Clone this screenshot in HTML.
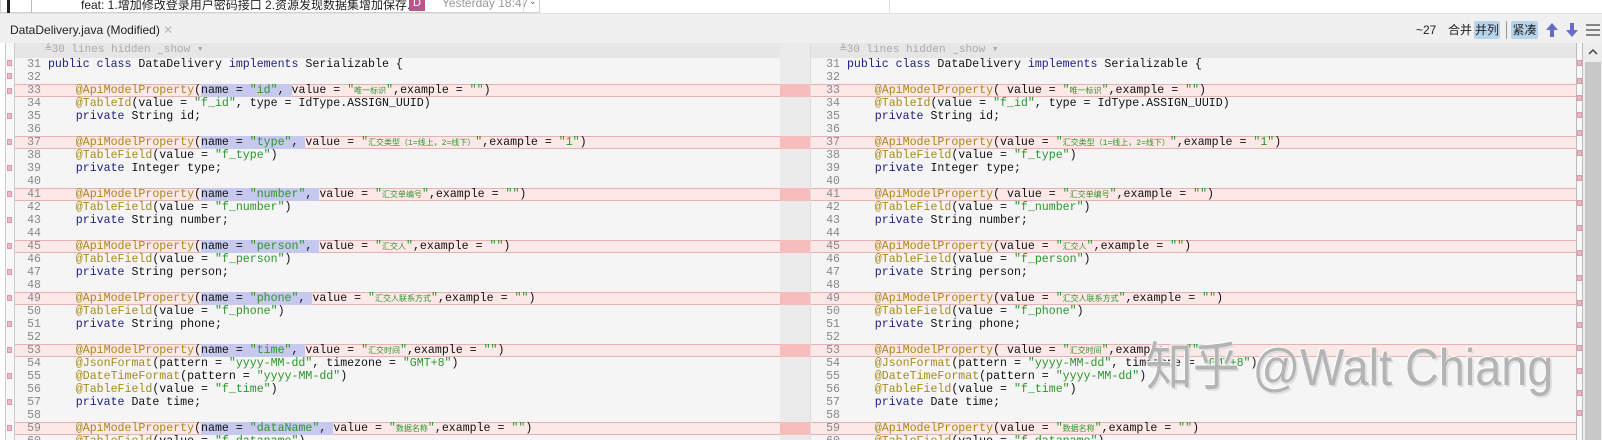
<!DOCTYPE html>
<html><head><meta charset="utf-8"><style>
*{margin:0;padding:0;box-sizing:border-box}
body{width:1602px;height:440px;overflow:hidden;background:#f0f0f0;position:relative;font-family:"Liberation Sans","Noto Sans CJK SC",sans-serif}
.top{position:absolute;left:0;top:0;width:1602px;height:14px;background:#fff;border-bottom:1px solid #e2e2e2}
.commit{position:absolute;left:0;top:-6px;width:540px;height:19px;border:1px solid #d0d0d0;background:#fff;font-size:12px;color:#222}
.tab{position:absolute;left:10px;top:23px;font-size:12px;color:#222}
.tb{position:absolute;top:21px;height:18px;line-height:18px;font-size:12px;color:#222;font-family:"Liberation Sans","Noto Sans CJK SC",sans-serif}
.pane{position:absolute;top:43px;height:397px;background:#f5f5f5;overflow:hidden;font-family:"Liberation Mono","Noto Sans CJK SC",monospace;font-size:11.6px}
.hdr{height:15px;background:#e6e6e6;color:#aaa;font-size:11px;line-height:14px}
.l{height:13px;line-height:13px;white-space:pre;position:relative;color:#111}
.l.d{background:#fde8e8;box-shadow:inset 0 1px 0 #e3b3b3,inset 0 -1px 0 #e3b3b3}
.n{display:inline-block;color:#888;text-align:right}
.a{color:#a68a1a}.k{color:#1e1e80}.s{color:#2c952c}.c{font-size:8px;color:#2c952c}.h{background:#c6c8ee}
.mid{position:absolute;left:780px;top:43px;width:30px;height:397px;background:#ebebeb}
.mb{position:absolute;left:0;width:30px;height:13px;background:#f7bcbc}
.mk{position:absolute;width:5px;height:6px;background:#f2b6c4;border:1px solid #d89aa8}
</style></head><body>
<div class="top"><div class="commit"><span style="position:absolute;left:6px;top:0;width:3px;height:18px;background:#222"></span><span style="position:absolute;left:30px;top:0;width:1px;height:18px;background:#bbb"></span><span style="position:absolute;left:80px;top:1px">feat: 1.增加修改登录用户密码接口 2.资源发现数据集增加保存...</span><span style="position:absolute;left:408px;top:0;width:16px;height:16px;background:#b8578a;color:#fff;font-size:11px;text-align:center;line-height:16px">D</span><span style="position:absolute;left:441px;top:1px;color:#999">Yesterday 18:47</span><span style="position:absolute;left:522px;top:0;width:1px;height:18px;background:#ddd"></span><span style="position:absolute;left:528px;top:1px;font-size:9px;color:#555">&#8964;</span></div>
<div style="position:absolute;left:560px;top:0;width:330px;height:14px;border-right:1px solid #ddd"></div></div>
<div class="tab">DataDelivery.java (Modified) <span style="color:#bbb">✕</span></div>
<div class="tb" style="left:1416px">~27</div>
<div class="tb" style="left:1448px">合并</div>
<div class="tb" style="left:1474px;width:26px;text-align:center;background:#b8d4ec;border-radius:2px">并列</div>
<div style="position:absolute;left:1506px;top:21px;width:1px;height:18px;background:#999"></div>
<div class="tb" style="left:1511px;width:27px;text-align:center;background:#b8d4ec;border-radius:2px">紧凑</div>
<svg style="position:absolute;left:1545px;top:22px" width="14" height="16" viewBox="0 0 14 16"><path d="M7 1 L13 8 L9 8 L9 15 L5 15 L5 8 L1 8 Z" fill="#6a6ac8"/></svg>
<svg style="position:absolute;left:1565px;top:22px" width="14" height="16" viewBox="0 0 14 16"><path d="M7 15 L13 8 L9 8 L9 1 L5 1 L5 8 L1 8 Z" fill="#6a6ac8"/></svg>
<svg style="position:absolute;left:1586px;top:23px" width="14" height="14" viewBox="0 0 14 14"><path d="M0 2H14M0 7H14M0 12H14" stroke="#444" stroke-width="1.3"/></svg>

<div style="position:absolute;left:0;top:43px;width:15px;height:397px;background:#f8f8f8;border-left:5px solid #fff;border-right:1px solid #ccc;box-shadow:inset 1px 0 0 #ccc"></div>

<div class="pane" style="left:15px;width:765px">
<div class="hdr"><span style="margin-left:30px">≜30 lines hidden  ˽show ▾</span></div>
<div class="l"><span class="n" style="width:26px">31</span> <span class="k">public class</span> DataDelivery <span class="k">implements</span> Serializable {</div>
<div class="l"><span class="n" style="width:26px">32</span></div>
<div class="l d"><span class="n" style="width:26px">33</span>     <span class="a">@ApiModelProperty</span>(<span class="h">name = <span class="s">"id"</span>, </span>value = <span class="s">"<span class="c">唯一标识</span>"</span>,example = <span class="s">""</span>)</div>
<div class="l"><span class="n" style="width:26px">34</span>     <span class="a">@TableId</span>(value = <span class="s">"f_id"</span>, type = IdType.ASSIGN_UUID)</div>
<div class="l"><span class="n" style="width:26px">35</span>     <span class="k">private</span> String id;</div>
<div class="l"><span class="n" style="width:26px">36</span></div>
<div class="l d"><span class="n" style="width:26px">37</span>     <span class="a">@ApiModelProperty</span>(<span class="h">name = <span class="s">"type"</span>, </span>value = <span class="s">"<span class="c">汇交类型（1=线上，2=线下）</span>"</span>,example = <span class="s">"1"</span>)</div>
<div class="l"><span class="n" style="width:26px">38</span>     <span class="a">@TableField</span>(value = <span class="s">"f_type"</span>)</div>
<div class="l"><span class="n" style="width:26px">39</span>     <span class="k">private</span> Integer type;</div>
<div class="l"><span class="n" style="width:26px">40</span></div>
<div class="l d"><span class="n" style="width:26px">41</span>     <span class="a">@ApiModelProperty</span>(<span class="h">name = <span class="s">"number"</span>, </span>value = <span class="s">"<span class="c">汇交单编号</span>"</span>,example = <span class="s">""</span>)</div>
<div class="l"><span class="n" style="width:26px">42</span>     <span class="a">@TableField</span>(value = <span class="s">"f_number"</span>)</div>
<div class="l"><span class="n" style="width:26px">43</span>     <span class="k">private</span> String number;</div>
<div class="l"><span class="n" style="width:26px">44</span></div>
<div class="l d"><span class="n" style="width:26px">45</span>     <span class="a">@ApiModelProperty</span>(<span class="h">name = <span class="s">"person"</span>, </span>value = <span class="s">"<span class="c">汇交人</span>"</span>,example = <span class="s">""</span>)</div>
<div class="l"><span class="n" style="width:26px">46</span>     <span class="a">@TableField</span>(value = <span class="s">"f_person"</span>)</div>
<div class="l"><span class="n" style="width:26px">47</span>     <span class="k">private</span> String person;</div>
<div class="l"><span class="n" style="width:26px">48</span></div>
<div class="l d"><span class="n" style="width:26px">49</span>     <span class="a">@ApiModelProperty</span>(<span class="h">name = <span class="s">"phone"</span>, </span>value = <span class="s">"<span class="c">汇交人联系方式</span>"</span>,example = <span class="s">""</span>)</div>
<div class="l"><span class="n" style="width:26px">50</span>     <span class="a">@TableField</span>(value = <span class="s">"f_phone"</span>)</div>
<div class="l"><span class="n" style="width:26px">51</span>     <span class="k">private</span> String phone;</div>
<div class="l"><span class="n" style="width:26px">52</span></div>
<div class="l d"><span class="n" style="width:26px">53</span>     <span class="a">@ApiModelProperty</span>(<span class="h">name = <span class="s">"time"</span>, </span>value = <span class="s">"<span class="c">汇交时间</span>"</span>,example = <span class="s">""</span>)</div>
<div class="l"><span class="n" style="width:26px">54</span>     <span class="a">@JsonFormat</span>(pattern = <span class="s">"yyyy-MM-dd"</span>, timezone = <span class="s">"GMT+8"</span>)</div>
<div class="l"><span class="n" style="width:26px">55</span>     <span class="a">@DateTimeFormat</span>(pattern = <span class="s">"yyyy-MM-dd"</span>)</div>
<div class="l"><span class="n" style="width:26px">56</span>     <span class="a">@TableField</span>(value = <span class="s">"f_time"</span>)</div>
<div class="l"><span class="n" style="width:26px">57</span>     <span class="k">private</span> Date time;</div>
<div class="l"><span class="n" style="width:26px">58</span></div>
<div class="l d"><span class="n" style="width:26px">59</span>     <span class="a">@ApiModelProperty</span>(<span class="h">name = <span class="s">"dataName"</span>, </span>value = <span class="s">"<span class="c">数据名称</span>"</span>,example = <span class="s">""</span>)</div>
<div class="l"><span class="n" style="width:26px">60</span>     <span class="a">@TableField</span>(value = <span class="s">"f_dataname"</span>)</div>
</div>

<div class="mid">
<div class="mb" style="top:41px"></div>
<div class="mb" style="top:93px"></div>
<div class="mb" style="top:145px"></div>
<div class="mb" style="top:197px"></div>
<div class="mb" style="top:249px"></div>
<div class="mb" style="top:301px"></div>
<div class="mb" style="top:379px"></div>
</div>

<div class="pane" style="left:810px;width:766px;border-left:1px solid #ddd">
<div class="hdr"><span style="margin-left:29px">≜30 lines hidden  ˽show ▾</span></div>
<div class="l"><span class="n" style="width:29px">31</span> <span class="k">public class</span> DataDelivery <span class="k">implements</span> Serializable {</div>
<div class="l"><span class="n" style="width:29px">32</span></div>
<div class="l d"><span class="n" style="width:29px">33</span>     <span class="a">@ApiModelProperty</span>( value = <span class="s">"<span class="c">唯一标识</span>"</span>,example = <span class="s">""</span>)</div>
<div class="l"><span class="n" style="width:29px">34</span>     <span class="a">@TableId</span>(value = <span class="s">"f_id"</span>, type = IdType.ASSIGN_UUID)</div>
<div class="l"><span class="n" style="width:29px">35</span>     <span class="k">private</span> String id;</div>
<div class="l"><span class="n" style="width:29px">36</span></div>
<div class="l d"><span class="n" style="width:29px">37</span>     <span class="a">@ApiModelProperty</span>(value = <span class="s">"<span class="c">汇交类型（1=线上，2=线下）</span>"</span>,example = <span class="s">"1"</span>)</div>
<div class="l"><span class="n" style="width:29px">38</span>     <span class="a">@TableField</span>(value = <span class="s">"f_type"</span>)</div>
<div class="l"><span class="n" style="width:29px">39</span>     <span class="k">private</span> Integer type;</div>
<div class="l"><span class="n" style="width:29px">40</span></div>
<div class="l d"><span class="n" style="width:29px">41</span>     <span class="a">@ApiModelProperty</span>( value = <span class="s">"<span class="c">汇交单编号</span>"</span>,example = <span class="s">""</span>)</div>
<div class="l"><span class="n" style="width:29px">42</span>     <span class="a">@TableField</span>(value = <span class="s">"f_number"</span>)</div>
<div class="l"><span class="n" style="width:29px">43</span>     <span class="k">private</span> String number;</div>
<div class="l"><span class="n" style="width:29px">44</span></div>
<div class="l d"><span class="n" style="width:29px">45</span>     <span class="a">@ApiModelProperty</span>(value = <span class="s">"<span class="c">汇交人</span>"</span>,example = <span class="s">""</span>)</div>
<div class="l"><span class="n" style="width:29px">46</span>     <span class="a">@TableField</span>(value = <span class="s">"f_person"</span>)</div>
<div class="l"><span class="n" style="width:29px">47</span>     <span class="k">private</span> String person;</div>
<div class="l"><span class="n" style="width:29px">48</span></div>
<div class="l d"><span class="n" style="width:29px">49</span>     <span class="a">@ApiModelProperty</span>(value = <span class="s">"<span class="c">汇交人联系方式</span>"</span>,example = <span class="s">""</span>)</div>
<div class="l"><span class="n" style="width:29px">50</span>     <span class="a">@TableField</span>(value = <span class="s">"f_phone"</span>)</div>
<div class="l"><span class="n" style="width:29px">51</span>     <span class="k">private</span> String phone;</div>
<div class="l"><span class="n" style="width:29px">52</span></div>
<div class="l d"><span class="n" style="width:29px">53</span>     <span class="a">@ApiModelProperty</span>( value = <span class="s">"<span class="c">汇交时间</span>"</span>,example = <span class="s">""</span>)</div>
<div class="l"><span class="n" style="width:29px">54</span>     <span class="a">@JsonFormat</span>(pattern = <span class="s">"yyyy-MM-dd"</span>, timezone = <span class="s">"GMT+8"</span>)</div>
<div class="l"><span class="n" style="width:29px">55</span>     <span class="a">@DateTimeFormat</span>(pattern = <span class="s">"yyyy-MM-dd"</span>)</div>
<div class="l"><span class="n" style="width:29px">56</span>     <span class="a">@TableField</span>(value = <span class="s">"f_time"</span>)</div>
<div class="l"><span class="n" style="width:29px">57</span>     <span class="k">private</span> Date time;</div>
<div class="l"><span class="n" style="width:29px">58</span></div>
<div class="l d"><span class="n" style="width:29px">59</span>     <span class="a">@ApiModelProperty</span>(value = <span class="s">"<span class="c">数据名称</span>"</span>,example = <span class="s">""</span>)</div>
<div class="l"><span class="n" style="width:29px">60</span>     <span class="a">@TableField</span>(value = <span class="s">"f_dataname"</span>)</div>
</div>

<div style="position:absolute;left:1576px;top:43px;width:7px;height:397px;background:#f8f8f8;border-left:1px solid #bbb;border-right:1px solid #bbb"></div>
<div style="position:absolute;left:1583px;top:43px;width:19px;height:397px;background:#ededed"></div>
<div style="position:absolute;left:1585px;top:62px;width:16px;height:378px;background:#c8c8c8"></div>
<svg style="position:absolute;left:1588px;top:48px" width="10" height="8" viewBox="0 0 10 8"><path d="M1 6 L5 2 L9 6" fill="none" stroke="#444" stroke-width="1.5"/></svg>

<div class="mk" style="left:7px;top:60px"></div><div class="mk" style="left:7px;top:73px"></div><div class="mk" style="left:7px;top:88px"></div><div class="mk" style="left:7px;top:113px"></div><div class="mk" style="left:7px;top:139px"></div><div class="mk" style="left:7px;top:165px"></div><div class="mk" style="left:7px;top:191px"></div><div class="mk" style="left:7px;top:217px"></div><div class="mk" style="left:7px;top:243px"></div><div class="mk" style="left:7px;top:269px"></div><div class="mk" style="left:7px;top:295px"></div><div class="mk" style="left:7px;top:321px"></div><div class="mk" style="left:7px;top:347px"></div><div class="mk" style="left:7px;top:373px"></div><div class="mk" style="left:7px;top:399px"></div><div class="mk" style="left:7px;top:425px"></div>
<div class="mk" style="left:1577px;top:60px"></div><div class="mk" style="left:1577px;top:78px"></div><div class="mk" style="left:1577px;top:95px"></div><div class="mk" style="left:1577px;top:112px"></div><div class="mk" style="left:1577px;top:130px"></div><div class="mk" style="left:1577px;top:150px"></div><div class="mk" style="left:1577px;top:175px"></div><div class="mk" style="left:1577px;top:200px"></div><div class="mk" style="left:1577px;top:225px"></div><div class="mk" style="left:1577px;top:250px"></div><div class="mk" style="left:1577px;top:275px"></div><div class="mk" style="left:1577px;top:300px"></div><div class="mk" style="left:1577px;top:322px"></div><div class="mk" style="left:1577px;top:345px"></div><div class="mk" style="left:1577px;top:368px"></div><div class="mk" style="left:1577px;top:390px"></div><div class="mk" style="left:1577px;top:410px"></div>

<div style="position:absolute;left:1146px;top:338px;font-size:52px;line-height:60px;color:#b4b4b4;white-space:nowrap;transform:scaleX(0.9);transform-origin:0 0;text-shadow:2px 2px 0 #e0e0e0,-1px -1px 0 #fff;font-family:'Liberation Sans','Noto Sans CJK SC',sans-serif">知乎 @Walt Chiang</div>
</body></html>
